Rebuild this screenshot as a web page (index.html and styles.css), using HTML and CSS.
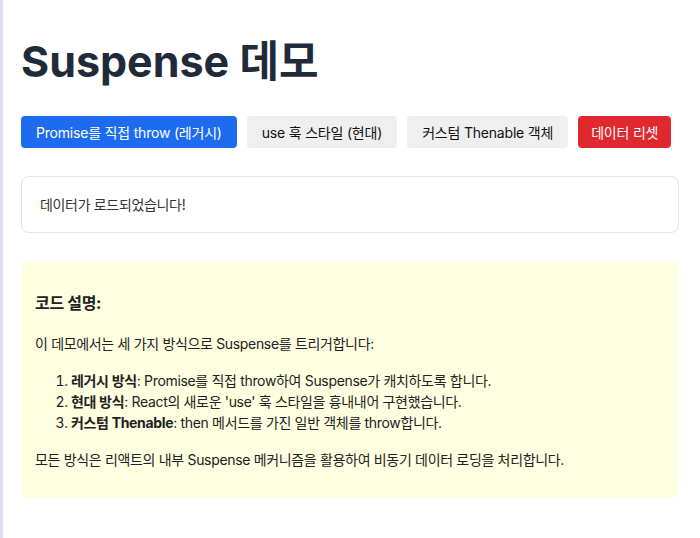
FILE: index.html
```html
<!DOCTYPE html>
<html lang="ko">
<head>
    <meta charset="UTF-8">
    <meta name="viewport" content="width=device-width, initial-scale=1.0">
    <title>Suspense 데모</title>
    <link rel="stylesheet" href="styles.css">
</head>
<body>
    <div class="app">
        <h1>Suspense 데모</h1>

        <div class="controls">
            <button type="button" class="btn btn-primary">Promise를 직접 throw (레거시)</button>
            <button type="button" class="btn">use 훅 스타일 (현대)</button>
            <button type="button" class="btn">커스텀 Thenable 객체</button>
            <button type="button" class="btn btn-danger">데이터 리셋</button>
        </div>

        <div class="data-box">데이터가 로드되었습니다!</div>

        <div class="explain">
            <h3>코드 설명:</h3>
            <p>이 데모에서는 세 가지 방식으로 Suspense를 트리거합니다:</p>
            <ol>
                <li><strong>레거시 방식</strong>: Promise를 직접 throw하여 Suspense가 캐치하도록 합니다.</li>
                <li><strong>현대 방식</strong>: React의 새로운 'use' 훅 스타일을 흉내내어 구현했습니다.</li>
                <li><strong>커스텀 Thenable</strong>: then 메서드를 가진 일반 객체를 throw합니다.</li>
            </ol>
            <p>모든 방식은 리액트의 내부 Suspense 메커니즘을 활용하여 비동기 데이터 로딩을 처리합니다.</p>
        </div>
    </div>
</body>
</html>
```

FILE: styles.css
```css
body {
    font-family: Inter, "Noto Sans CJK KR", sans-serif;
    font-size: 14px;
    line-height: 1.5;
    letter-spacing: -0.33px;
    color: #222;
    margin: 0;
    padding: 0 21px 0 18px;
    border-left: 3px solid #dcdcf0;
    min-height: 538px;
    box-sizing: border-box;
    background-color: #fff;
}

.app {
    padding-top: 36px;
}

h1 {
    font-size: 43px;
    font-weight: 700;
    letter-spacing: 0;
    color: #1f2b3a;
    margin: 0 0 28px;
    line-height: 1.2;
}

.controls {
    display: flex;
    gap: 10px;
    margin-bottom: 28px;
}

.btn {
    flex: none;
    white-space: nowrap;
    height: 32px;
    padding: 0 15px;
    font-family: inherit;
    font-size: 14px;
    letter-spacing: -0.2px;
    color: #111;
    background-color: #efefef;
    border: none;
    border-radius: 4px;
    cursor: pointer;
}

.btn-primary {
    background-color: #1d6cf0;
    color: #fff;
}

.btn-danger {
    padding: 0 13px;
    background-color: #e0282f;
    color: #fff;
}

.data-box {
    border: 1px solid #e4e4e4;
    border-radius: 8px;
    padding: 19px 18px;
    color: #333;
    line-height: 17px;
    margin-bottom: 28px;
}

.explain {
    background-color: #fefee0;
    border-radius: 8px;
    padding: 14px 14px 12px;
    color: #222;
}

.explain h3 {
    font-size: 16px;
    margin: 16px 0 18px;
}

.explain p {
    margin: 16px 0;
}

.explain ol {
    margin: 16px 0;
    padding-left: 36px;
}
```
